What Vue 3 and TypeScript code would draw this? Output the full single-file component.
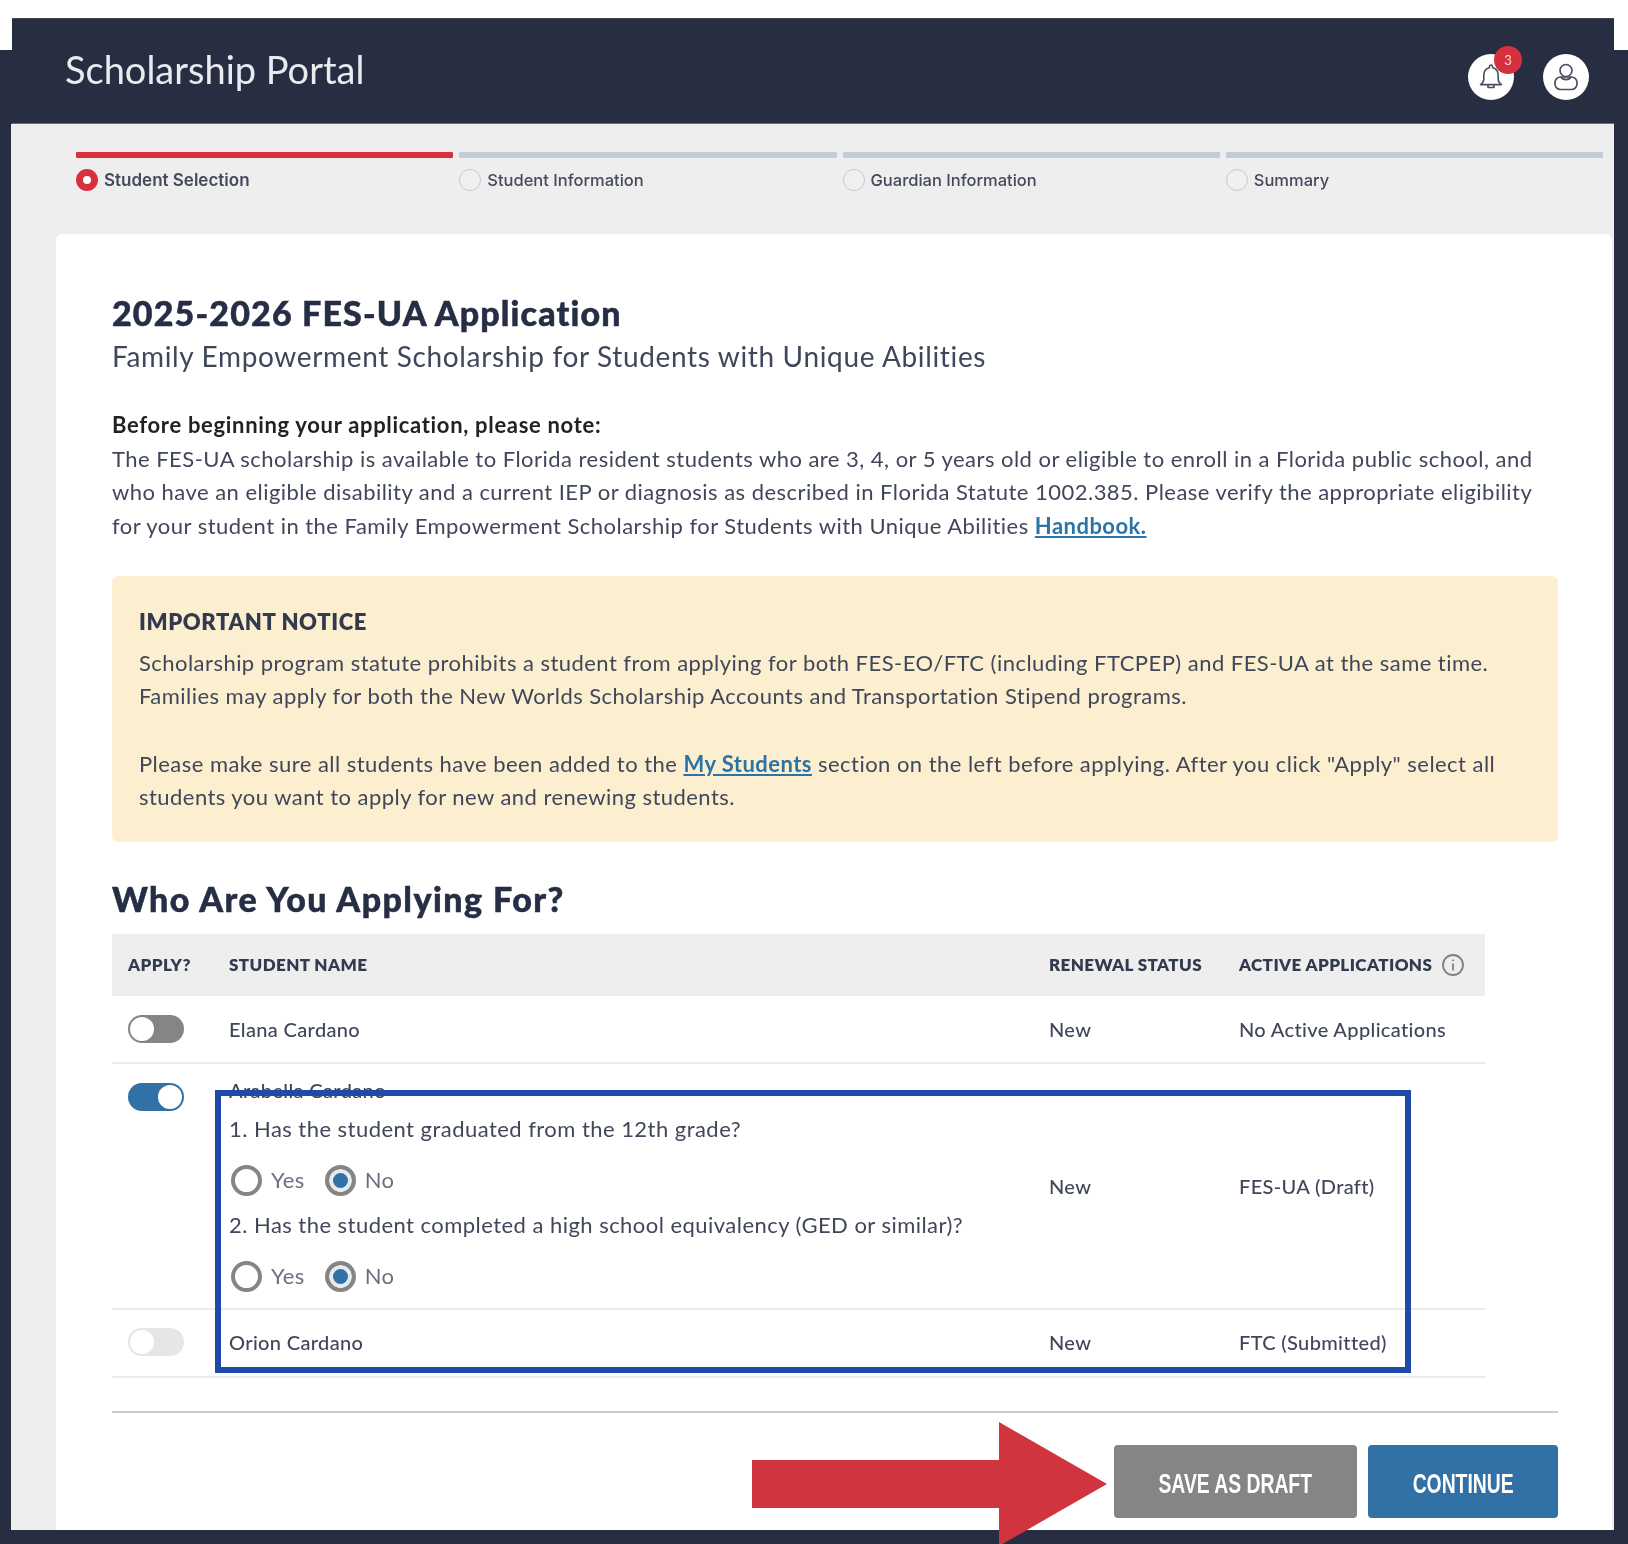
<script setup lang="ts">
interface Step { label: string; active: boolean }
const steps: Step[] = [
  { label: 'Student Selection', active: true },
  { label: 'Student Information', active: false },
  { label: 'Guardian Information', active: false },
  { label: 'Summary', active: false },
]
const questions = [
  '1. Has the student graduated from the 12th grade?',
  '2. Has the student completed a high school equivalency (GED or similar)?',
]
</script>

<template>
  <div class="frame">
    <header class="topbar">
      <div class="brand">Scholarship Portal</div>
      <div class="top-icons">
        <div class="round">
          <svg width="28" height="30" viewBox="0 0 28 30" fill="none" stroke="#4a4f5e" stroke-width="1.6" stroke-linejoin="round" stroke-linecap="round">
            <path d="M14 3a1.6 1.6 0 0 1 1.6 1.6v1.2c3.8 .9 5.6 4 5.6 7.6v4.2c0 2 1.4 3.6 3.3 5H3.500c1.900-1.400 3.300-3 3.300-5v-4.200c0-3.600 1.800-6.700 5.600-7.600V4.600A1.600 1.600 0 0 1 14 3z" />
            <path d="M11 23v2.500h6V23" />
          </svg>
          <span class="badge">3</span>
        </div>
        <div class="round">
          <svg width="28" height="30" viewBox="0 0 28 30" fill="none" stroke="#4a4f5e" stroke-width="1.7" stroke-linejoin="round">
            <circle cx="14" cy="8.500" r="6" />
            <rect x="3" y="15" width="22" height="12.500" rx="5.500" />
            <path d="M9 15c1 1.800 3 2.600 5 2.600s4-.8 5-2.600" />
          </svg>
        </div>
      </div>
    </header>

    <main class="page">
      <ol class="stepper">
        <li v-for="s in steps" :key="s.label" class="step" :class="{ on: s.active }">
          <div class="step-bar"></div>
          <div class="step-row">
            <span class="step-dot"></span>
            <span class="step-label">{{ s.label }}</span>
          </div>
        </li>
      </ol>

      <section class="card">
        <h1 class="title">2025-2026 FES-UA Application</h1>
        <p class="subtitle">Family Empowerment Scholarship for Students with Unique Abilities</p>

        <div class="intro">
          <strong>Before beginning your application, please note:</strong><br />
          The FES-UA scholarship is available to Florida resident students who are 3, 4, or 5 years old or eligible to enroll in a Florida public school, and<br />
          who have an eligible disability and a current IEP or diagnosis as described in Florida Statute 1002.385. Please verify the appropriate eligibility<br />
          for your student in the Family Empowerment Scholarship for Students with Unique Abilities <a class="link" href="#">Handbook.</a>
        </div>

        <div class="notice">
          <div class="notice-title">IMPORTANT NOTICE</div>
          <p class="notice-text">
            Scholarship program statute prohibits a student from applying for both FES-EO/FTC (including FTCPEP) and FES-UA at the same time.<br />
            Families may apply for both the New Worlds Scholarship Accounts and Transportation Stipend programs.
          </p>
          <p class="notice-text gap">
            Please make sure all students have been added to the <a class="link" href="#">My Students</a> section on the left before applying. After you click "Apply" select all<br />
            students you want to apply for new and renewing students.
          </p>
        </div>

        <h2 class="who">Who Are You Applying For?</h2>

        <div class="table">
          <div class="row head">
            <div>APPLY?</div>
            <div>STUDENT NAME</div>
            <div>RENEWAL STATUS</div>
            <div class="active-head">
              ACTIVE APPLICATIONS
              <svg width="24" height="24" viewBox="0 0 24 24" fill="none" stroke="#7d7f85" stroke-width="1.800">
                <circle cx="12" cy="12" r="10" />
                <path d="M12 10.500v7M12 6.500v1.500" />
              </svg>
            </div>
          </div>

          <div class="row">
            <div><span class="toggle off"></span></div>
            <div>Elana Cardano</div>
            <div>New</div>
            <div>No Active Applications</div>
          </div>

          <div class="row tall">
            <div class="top-cell"><span class="toggle checked"></span></div>
            <div class="name-stack">
              <div class="name">Arabella Cardano</div>
              <template v-for="q in questions" :key="q">
                <div class="question">{{ q }}</div>
                <div class="radios">
                  <span class="radio"></span><span class="radio-label">Yes</span>
                  <span class="radio picked"></span><span class="radio-label">No</span>
                </div>
              </template>
            </div>
            <div class="status">New</div>
            <div class="status">FES-UA (Draft)</div>
          </div>

          <div class="row last">
            <div><span class="toggle disabled"></span></div>
            <div>Orion Cardano</div>
            <div>New</div>
            <div>FTC (Submitted)</div>
          </div>
        </div>

        <div class="actions">
          <button class="btn draft" type="button"><span>SAVE AS DRAFT</span></button>
          <button class="btn go" type="button"><span>CONTINUE</span></button>
        </div>
      </section>
    </main>

    <div class="highlight"></div>
    <svg class="arrow" width="355" height="122" viewBox="0 0 355 122">
      <path fill="#d0353f" d="M0 38H247V0L355 62 247 124V86H0z" />
    </svg>
  </div>
</template>

<style scoped>
.frame {
  position: relative;
  box-sizing: border-box;
  width: 1628px;
  height: 1544px;
  overflow: hidden;
  padding: 18px 14px 14px 11px;
  display: flex;
  flex-direction: column;
  background: linear-gradient(#fff 50px, #282e42 50px);
  font-family: Lato, "Noto Sans", sans-serif;
  color: #41475a;
}
.topbar {
  flex: none;
  box-sizing: border-box;
  height: 106px;
  margin-left: 1px;
  padding: 0 25px 0 53px;
  display: flex;
  align-items: center;
  justify-content: space-between;
  background: #282e42;
  border-top: 1px solid #46474e;
  border-bottom: 1px solid #6a6f80;
}
.brand {
  color: #e9ebef;
  font-size: 38px;
  font-weight: 400;
  line-height: 44px;
  margin-top: -5px;
  filter: blur(.4px);
}
.top-icons {
  display: flex;
  gap: 29px;
  margin-top: 12px;
}
.round {
  position: relative;
  width: 46px;
  height: 46px;
  border-radius: 50%;
  background: #fff;
  display: flex;
  align-items: center;
  justify-content: center;
}
.badge {
  position: absolute;
  left: 26px;
  top: -8px;
  width: 28px;
  height: 28px;
  border-radius: 50%;
  background: #d5303e;
  color: #f6d5d8;
  font-size: 13px;
  line-height: 28px;
  text-align: center;
}
.page {
  flex: 1;
  min-height: 0;
  overflow: hidden;
  background: #eeeeee;
  padding-top: 28px;
}
.stepper {
  list-style: none;
  margin: 0 11px 43px 65px;
  padding: 0;
  display: grid;
  grid-template-columns: repeat(4, 1fr);
  gap: 6px;
}
.step-bar {
  height: 6px;
  border-radius: 1px;
  background: #c3ccd6;
}
.step.on .step-bar { background: #d9303f; }
.step-row {
  margin-top: 11px;
  display: flex;
  align-items: center;
  gap: 6px;
}
.step-dot {
  box-sizing: border-box;
  width: 22px;
  height: 22px;
  border-radius: 50%;
  border: 1.5px solid #c3ccd6;
  background: #f0f0f0;
}
.step.on .step-dot {
  border: 7.500px solid #d9303f;
  background: #fff;
}
.step-label {
  font-family: Inter, sans-serif;
  font-size: 16.500px;
  font-weight: 500;
  line-height: 22px;
  color: #444a5c;
  filter: blur(.3px);
}
.step.on .step-label { font-size: 17px; font-weight: 600; }
.card {
  margin: 0 2px 0 45px;
  padding: 59px 54px 0 56px;
  height: 1400px;
  box-sizing: border-box;
  background: #fff;
  border-radius: 6px 6px 0 0;
  filter: blur(.35px);
}
.title {
  margin: 0;
  font-size: 34px;
  line-height: 40px;
  font-weight: 900;
  letter-spacing: 1.150px;
  -webkit-text-stroke: .5px #262e45;
  color: #262e45;
}
.subtitle {
  margin: 5px 0 0;
  font-size: 28px;
  letter-spacing: .65px;
  line-height: 36px;
}
.intro {
  margin-top: 34px;
  font-size: 22px;
  letter-spacing: .47px;
  line-height: 33.700px;
  white-space: nowrap;
}
.intro strong { color: #222; font-weight: 700; letter-spacing: .68px; }
.link {
  color: #2b74a8;
  font-weight: 700;
  text-decoration: underline;
}
.notice {
  margin-top: 33px;
  padding: 31px 27px 28px 27px;
  background: #fcefcf;
  border-radius: 6px;
  white-space: nowrap;
}
.notice-title {
  font-size: 22px;
  line-height: 30px;
  font-weight: 800;
  letter-spacing: .6px;
  color: #333a4d;
}
.notice-text {
  margin: 9px 0 0;
  font-size: 22px;
  letter-spacing: .46px;
  line-height: 33.600px;
}
.notice-text.gap { margin-top: 33.600px; }
.who {
  margin: 37px 0 15px;
  font-size: 34px;
  line-height: 40px;
  font-weight: 900;
  letter-spacing: 1.450px;
  -webkit-text-stroke: .5px #262e45;
  color: #262e45;
}
.table { width: 1373px; }
.row {
  display: grid;
  grid-template-columns: 117px 820px 190px 246px;
  align-items: center;
  min-height: 65px;
  padding-top: 1px;
  border-bottom: 2px solid #ececec;
  font-size: 20px;
  letter-spacing: .35px;
  line-height: 24px;
  font-weight: 500;
}
.row > div:first-child { padding-left: 16px; }
.row.head {
  min-height: 57px;
  padding-top: 3px;
  background: #eeeeee;
  font-size: 17px;
  letter-spacing: .4px;
  font-weight: 800;
  color: #333a4d;
}
.active-head {
  display: flex;
  align-items: center;
  gap: 9px;
}
.row.tall { min-height: 242px; padding-top: 2px; }
.row.last { min-height: 67px; padding-top: 0; margin-top: -1px; }
.status { margin-top: -1px; }
.top-cell { align-self: start; padding-top: 17px; }
.toggle {
  position: relative;
  display: block;
  width: 56px;
  height: 28px;
  border-radius: 14px;
  background: #858585;
}
.toggle::after {
  content: "";
  position: absolute;
  top: 2px;
  width: 24px;
  height: 24px;
  border-radius: 50%;
  background: #fff;
}
.toggle.off::after { left: 2px; }
.toggle.checked { background: #3171a6; }
.toggle.checked::after { right: 2px; }
.toggle.disabled { background: #e6e6e6; }
.toggle.disabled::after { left: 2px; }
.name-stack { align-self: start; padding-top: 12px; }
.question {
  margin-top: 12px;
  line-height: 30px;
  font-size: 22px;
  letter-spacing: .46px;
  font-weight: 400;
}
.radios {
  margin: 21px 0 14px;
  height: 31px;
  display: flex;
  align-items: center;
  font-size: 22px;
  letter-spacing: .4px;
  font-weight: 400;
  color: #6b7080;
}
.radio {
  box-sizing: border-box;
  width: 31px;
  height: 31px;
  margin-left: 2px;
  border-radius: 50%;
  border: 4px solid #858585;
  background: #fff;
}
.radio.picked {
  background: #3171a6;
  box-shadow: inset 0 0 0 4px #e8ebee;
}
.radio-label { margin: 0 18px 0 9px; }
.radios + .question { margin-top: 0; }
.actions {
  margin-top: 33px;
  padding-top: 32px;
  border-top: 2px solid #cccccc;
  display: flex;
  justify-content: flex-end;
  gap: 11px;
}
.btn {
  height: 73px;
  border: 0;
  border-radius: 4px;
  color: #fff;
  font-family: "Liberation Sans", sans-serif;
  font-size: 28px;
  font-weight: 700;
  display: flex;
  align-items: center;
  justify-content: center;
  padding: 5px 0 0;
}
.btn span { display: inline-block; transform: scaleX(.69); white-space: nowrap; }
.btn.draft { width: 243px; background: #858585; }
.btn.go { width: 190px; background: #3171a6; }
.highlight {
  position: absolute;
  left: 215px;
  top: 1090px;
  width: 1196px;
  height: 283px;
  box-sizing: border-box;
  border: 6px solid #1f4aa8;
}
.arrow {
  position: absolute;
  left: 752px;
  top: 1422px;
}
</style>
